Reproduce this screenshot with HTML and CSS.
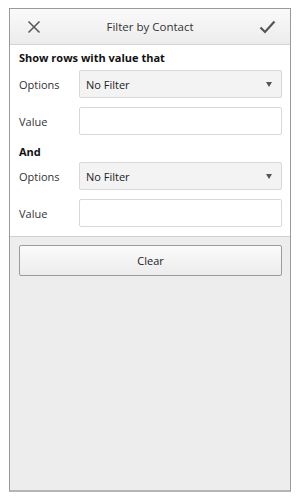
FILE: index.html
```html
<!DOCTYPE html>
<html>
<head>
<meta charset="utf-8">
<link rel="stylesheet" href="styles.css">
</head>
<body>
<div class="frame">
  <div class="header">
    <span class="icon-btn">
      <svg width="14" height="14" viewBox="0 0 14 14"><path d="M1.5 1.5 L12.5 12.5 M12.5 1.5 L1.5 12.5" stroke="#555" stroke-width="1.5" fill="none"/></svg>
    </span>
    <span class="title">Filter by Contact</span>
    <span class="icon-btn">
      <svg width="17" height="14" viewBox="0 0 17 14"><path d="M1.5 7.5 L6 12 L15.5 1.5" stroke="#555" stroke-width="2.2" fill="none"/></svg>
    </span>
  </div>
  <div class="content">
    <div class="heading">Show rows with value that</div>
    <div class="row">
      <span class="label">Options</span>
      <div class="select"><span>No Filter</span><span class="arrow"></span></div>
    </div>
    <div class="row">
      <span class="label">Value</span>
      <div class="input"></div>
    </div>
    <div class="heading and">And</div>
    <div class="row">
      <span class="label">Options</span>
      <div class="select"><span>No Filter</span><span class="arrow"></span></div>
    </div>
    <div class="row">
      <span class="label">Value</span>
      <div class="input"></div>
    </div>
  </div>
  <div class="footer">
    <div class="button">Clear</div>
  </div>
</div>
</body>
</html>
```
FILE: styles.css
```css
html, body { margin: 0; padding: 0; background: #fff; }
body { padding: 8px 10px 8px 9px; font-family: "Open Sans", "Noto Sans", sans-serif; font-size: 11px; color: #222; }
.frame {
  box-sizing: border-box;
  height: 484px;
  border: 1px solid #9a9a9a;
  border-bottom: 2px solid #b5b5b5;
  display: flex;
  flex-direction: column;
  background: #ededed;
}
.header {
  height: 35px;
  border-bottom: 1px solid #d4d4d4;
  background: linear-gradient(#fafafa, #ececec);
  display: flex;
  align-items: center;
  justify-content: space-between;
  padding: 0 14px 0 17px;
}
.icon-btn { display: flex; align-items: center; }
.title { font-size: 11.5px; color: #333; }
.content {
  background: #fff;
  padding: 5px 8px 9px 9px;
  border-bottom: 1px solid #d0d0d0;
}
.heading { font-weight: bold; font-size: 11px; height: 15px; line-height: 15px; margin-bottom: 5px; color: #111; }
.heading.and { margin-top: 1px; margin-bottom: 3px; }
.row { display: flex; align-items: center; margin-bottom: 9px; }
.row:last-child { margin-bottom: 0; }
.label { width: 60px; flex: none; color: #333; }
.select, .input {
  flex: 1;
  box-sizing: border-box;
  height: 28px;
  border: 1px solid #d8d8d8;
  border-radius: 2px;
}
.select {
  background: #f3f3f3;
  display: flex;
  align-items: center;
  justify-content: space-between;
  padding: 0 9px 0 6px;
  color: #222;
}
.arrow {
  width: 0; height: 0;
  border-left: 3.5px solid transparent;
  border-right: 3.5px solid transparent;
  border-top: 5px solid #555;
}
.input { background: #fff; }
.footer { flex: 1; padding: 8px 8px 0 9px; }
.button {
  height: 31px;
  box-sizing: border-box;
  border: 1px solid #9c9c9c;
  border-radius: 2px;
  background: linear-gradient(#fbfbfb, #ececec);
  display: flex;
  align-items: center;
  justify-content: center;
  color: #222;
}
```
